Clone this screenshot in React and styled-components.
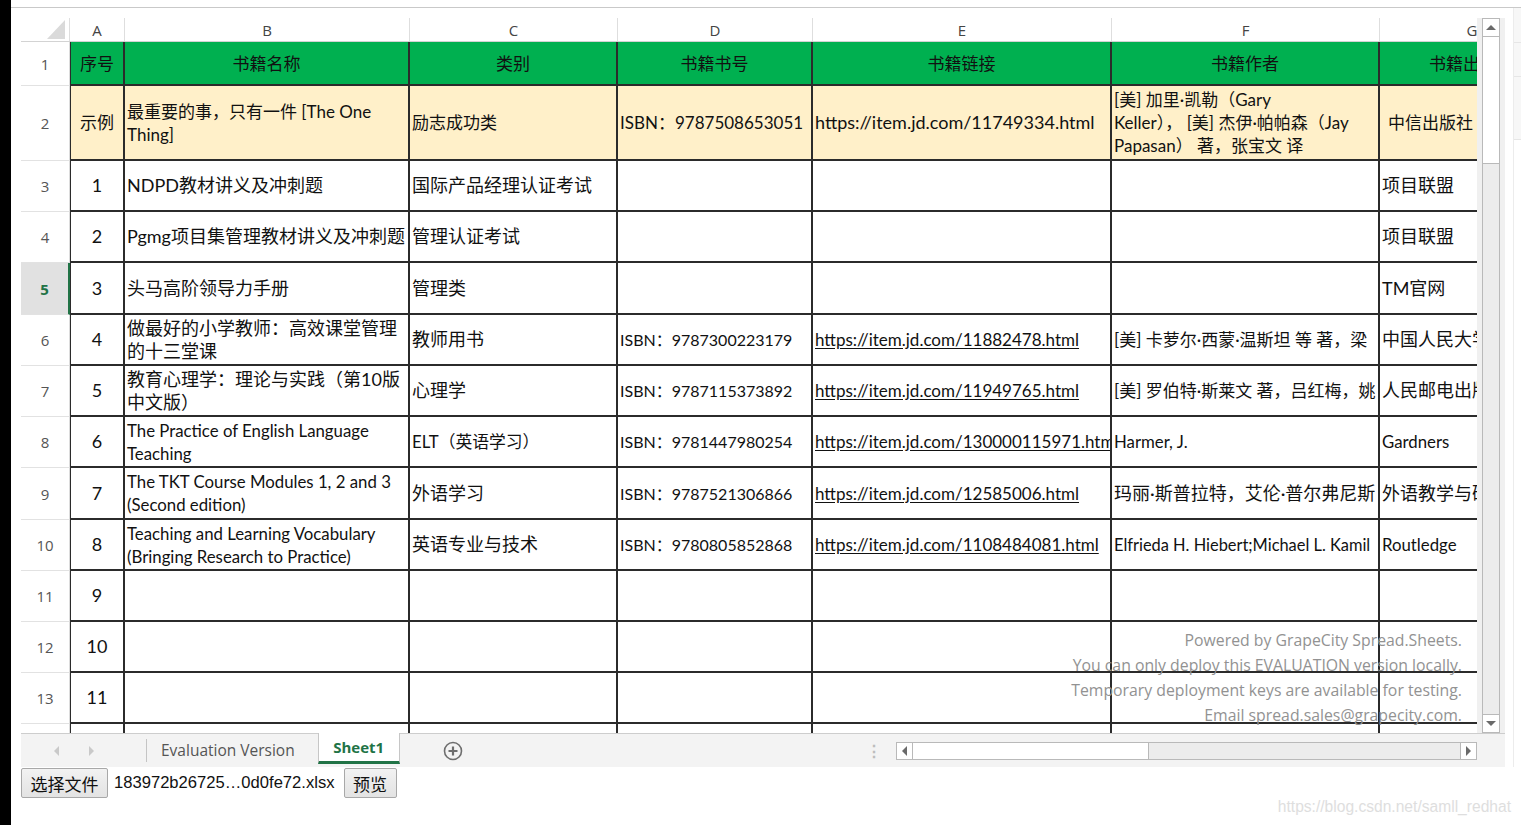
import React from "react";
import styled, { createGlobalStyle } from "styled-components";

const GlobalStyle = createGlobalStyle`
  html, body {
    margin: 0;
    padding: 0;
    background: #fff;
  }
  body {
    font-family: "Open Sans", "Noto Sans CJK SC", sans-serif;
    overflow: hidden;
  }
`;

const LATIN = `"Lato", "Noto Sans CJK SC", sans-serif`;
const SEGOE = `"Open Sans", "Noto Sans CJK SC", sans-serif`;

const COLS = [55, 285, 208, 195, 299, 268, 185];
const LETTERS = ["A", "B", "C", "D", "E", "F", "G"];

// cell helpers
const c = (t, o = {}) => ({ t, ...o });
const num = (t) => c(t, { align: "c", size: 18 });
const en = (t) => c(t, { size: 16.8 });
const isbn = (t) => c(`ISBN：${t}`, { size: 16 });
const link = (t) => c(t, { size: 17, u: true });

const HEAD = ["序号", "书籍名称", "类别", "书籍书号", "书籍链接", "书籍作者", "书籍出版社"].map((t) =>
  c(t, { align: "c", size: 17 })
);

const ROWS = [
  { n: 1, h: 44, bg: "#00b050", cells: HEAD },
  {
    n: 2,
    h: 75,
    bg: "#fff0c9",
    cells: [
      c("示例", { align: "c", size: 17 }),
      c(["最重要的事，只有一件 [The One", "Thing]"], { size: 17 }),
      c("励志成功类", { size: 17 }),
      c("ISBN：9787508653051", { size: 17 }),
      c("https://item.jd.com/11749334.html", { size: 18 }),
      c(["[美] 加里·凯勒（Gary", "Keller）， [美] 杰伊·帕帕森（Jay", "Papasan） 著，张宝文 译"], { size: 17 }),
      c("中信出版社", { size: 17, pad: 8 }),
    ],
  },
  { n: 3, h: 51, cells: [num("1"), c("NDPD教材讲义及冲刺题"), c("国际产品经理认证考试"), c(""), c(""), c(""), c("项目联盟")] },
  { n: 4, h: 51, cells: [num("2"), c("Pgmg项目集管理教材讲义及冲刺题"), c("管理认证考试"), c(""), c(""), c(""), c("项目联盟")] },
  { n: 5, h: 52, selected: true, cells: [num("3"), c("头马高阶领导力手册"), c("管理类"), c(""), c(""), c(""), c("TM官网")] },
  {
    n: 6,
    h: 51,
    cells: [
      num("4"),
      c(["做最好的小学教师：高效课堂管理", "的十三堂课"]),
      c("教师用书"),
      isbn("9787300223179"),
      link("https://item.jd.com/11882478.html"),
      c("[美] 卡萝尔·西蒙·温斯坦 等 著，梁", { size: 17 }),
      c("中国人民大学出版社"),
    ],
  },
  {
    n: 7,
    h: 51,
    cells: [
      num("5"),
      c(["教育心理学：理论与实践（第10版", "中文版）"]),
      c("心理学"),
      isbn("9787115373892"),
      link("https://item.jd.com/11949765.html"),
      c("[美] 罗伯特·斯莱文 著，吕红梅，姚", { size: 17 }),
      c("人民邮电出版社"),
    ],
  },
  {
    n: 8,
    h: 51,
    cells: [
      num("6"),
      en(["The Practice of English Language", "Teaching"]),
      en("ELT（英语学习）"),
      isbn("9781447980254"),
      link("https://item.jd.com/130000115971.html"),
      en("Harmer, J."),
      en("Gardners"),
    ],
  },
  {
    n: 9,
    h: 52,
    cells: [
      num("7"),
      en(["The TKT Course Modules 1, 2 and 3", "(Second edition)"]),
      c("外语学习"),
      isbn("9787521306866"),
      link("https://item.jd.com/12585006.html"),
      c("玛丽·斯普拉特，艾伦·普尔弗尼斯"),
      c("外语教学与研究出版社"),
    ],
  },
  {
    n: 10,
    h: 51,
    cells: [
      num("8"),
      en(["Teaching and Learning Vocabulary", "(Bringing Research to Practice)"]),
      c("英语专业与技术"),
      isbn("9780805852868"),
      link("https://item.jd.com/1108484081.html"),
      c("Elfrieda H. Hiebert;Michael L. Kamil", { size: 16.4 }),
      en("Routledge"),
    ],
  },
  { n: 11, h: 51, cells: [num("9"), c(""), c(""), c(""), c(""), c(""), c("")] },
  { n: 12, h: 51, cells: [num("10"), c(""), c(""), c(""), c(""), c(""), c("")] },
  { n: 13, h: 51, cells: [num("11"), c(""), c(""), c(""), c(""), c(""), c("")] },
  { n: 14, h: 51, cells: [num("12"), c(""), c(""), c(""), c(""), c(""), c("")] },
];

const EVAL_LINES = [
  "Powered by GrapeCity Spread.Sheets.",
  "You can only deploy this EVALUATION version locally.",
  "Temporary deployment keys are available for testing.",
  "Email spread.sales@grapecity.com.",
];

export default function App() {
  return (
    <Page>
      <GlobalStyle />
      <Strip />
      <Main>
        <TopBar />
        <Body>
          <Workbook>
            <SheetArea>
              <Viewport>
                <HeaderRow>
                  <Corner />
                  {LETTERS.map((l, i) => (
                    <ColHeader key={l} $w={COLS[i]}>
                      {l}
                    </ColHeader>
                  ))}
                </HeaderRow>
                {ROWS.map((row) => (
                  <Row key={row.n} $h={row.h}>
                    <RowHeader $selected={row.selected}>{row.n}</RowHeader>
                    {row.cells.map((cell, i) => (
                      <Cell
                        key={i}
                        $w={COLS[i]}
                        $first={i === 0}
                        $bg={row.bg}
                        $align={cell.align}
                        $size={cell.size || 18}
                        $pad={cell.pad}
                      >
                        {Array.isArray(cell.t) ? (
                          cell.t.map((line) => <Line key={line}>{line}</Line>)
                        ) : (
                          <Line $u={cell.u}>{cell.t}</Line>
                        )}
                      </Cell>
                    ))}
                  </Row>
                ))}
                <EvalNotice>
                  {EVAL_LINES.map((l) => (
                    <div key={l}>{l}</div>
                  ))}
                </EvalNotice>
              </Viewport>
              <VScrollCol>
                <VScroll>
                  <ArrowBox $v>
                    <Tri $dir="up" />
                  </ArrowBox>
                  <VThumb />
                  <VTrack />
                  <ArrowBox $v $end>
                    <Tri $dir="down" />
                  </ArrowBox>
                </VScroll>
              </VScrollCol>
            </SheetArea>
            <TabStrip>
              <NavArrows>
                <Tri $dir="left" $light />
                <Tri $dir="right" $light />
              </NavArrows>
              <TabDivider />
              <Tab>Evaluation Version</Tab>
              <Tab $active>Sheet1</Tab>
              <AddSheet>
                <svg width="20" height="20" viewBox="0 0 20 20">
                  <circle cx="10" cy="10" r="8.5" fill="none" stroke="#6e6e6e" strokeWidth="1.6" />
                  <path d="M10 5.5v9M5.5 10h9" stroke="#6e6e6e" strokeWidth="2.2" />
                </svg>
              </AddSheet>
              <Splitter>⋮</Splitter>
              <HScroll>
                <ArrowBox>
                  <Tri $dir="left" />
                </ArrowBox>
                <HThumb />
                <HTrack />
                <ArrowBox $end>
                  <Tri $dir="right" />
                </ArrowBox>
              </HScroll>
            </TabStrip>
          </Workbook>
          <SidePanel>
            <SideCell $h={34} />
            <SideCell $h={33} />
            <SideCell $h={62} />
          </SidePanel>
        </Body>
        <FileRow>
          <FileButton>选择文件</FileButton>
          <FileName>183972b26725…0d0fe72.xlsx</FileName>
          <FileButton>预览</FileButton>
        </FileRow>
      </Main>
      <CsdnMark>https://blog.csdn.net/samll_redhat</CsdnMark>
    </Page>
  );
}

// Styled Components
const Page = styled.div`
  position: relative;
  display: flex;
  width: 1521px;
  height: 825px;
  overflow: hidden;
  background: #fff;
`;

const Strip = styled.div`
  flex: 0 0 11px;
  background: #000;
`;

const Main = styled.div`
  flex: 1;
  display: flex;
  flex-direction: column;
`;

const TopBar = styled.div`
  height: 7px;
  border-bottom: 1px solid #c9c9c9;
`;

const Body = styled.div`
  display: flex;
  margin-top: 10px;
  padding-left: 10px;
  gap: 8px;
`;

const Workbook = styled.div`
  width: 1484px;
  display: flex;
  flex-direction: column;
`;

const SheetArea = styled.div`
  display: flex;
  height: 715px;
`;

const Viewport = styled.div`
  position: relative;
  width: 1456px;
  height: 715px;
  overflow: hidden;
  background: #fff;
`;

const HeaderRow = styled.div`
  display: flex;
  height: 24px;
  box-sizing: border-box;
  border-bottom: 1px solid #d3d3d3;
`;

const Corner = styled.div`
  position: relative;
  flex: 0 0 49px;
  box-sizing: border-box;
  border-right: 1px solid #dedede;

  &::after {
    content: "";
    position: absolute;
    right: 4px;
    bottom: 2px;
    width: 18px;
    height: 19px;
    background: #dadada;
    clip-path: polygon(100% 0, 100% 100%, 0 100%);
  }
`;

const ColHeader = styled.div`
  flex: 0 0 ${(p) => p.$w}px;
  box-sizing: border-box;
  border-right: 1px solid #dedede;
  display: flex;
  align-items: center;
  justify-content: center;
  font-family: ${SEGOE};
  font-size: 15px;
  color: #444;
`;

const Row = styled.div`
  display: flex;
  height: ${(p) => p.$h}px;
  flex: 0 0 ${(p) => p.$h}px;
`;

const RowHeader = styled.div`
  flex: 0 0 49px;
  box-sizing: border-box;
  display: flex;
  align-items: center;
  justify-content: center;
  font-family: ${SEGOE};
  font-size: 15px;
  color: ${(p) => (p.$selected ? "#217346" : "#555")};
  font-weight: ${(p) => (p.$selected ? 700 : 400)};
  background: ${(p) => (p.$selected ? "#e1e1e1" : "#fff")};
  border-bottom: 1px solid #e2e2e2;
  border-right: ${(p) => (p.$selected ? "2px solid #217346" : "1px solid #dcdcdc")};
`;

const Cell = styled.div`
  flex: 0 0 ${(p) => p.$w}px;
  width: ${(p) => p.$w}px;
  box-sizing: border-box;
  display: flex;
  flex-direction: column;
  justify-content: center;
  align-items: ${(p) => (p.$align === "c" ? "center" : "flex-start")};
  padding: 0 ${(p) => (p.$pad != null ? p.$pad : 2)}px;
  border-right: 2px solid #2b2b2b;
  border-bottom: 2px solid #2b2b2b;
  border-left: ${(p) => (p.$first ? "1px solid #2b2b2b" : "none")};
  background: ${(p) => p.$bg || "#fff"};
  overflow: hidden;
  white-space: nowrap;
  font-family: ${LATIN};
  font-size: ${(p) => p.$size}px;
  line-height: 23px;
  color: #111;
`;

const Line = styled.span`
  display: block;
  text-decoration: ${(p) => (p.$u ? "underline" : "none")};
  text-underline-offset: 2px;
`;

const EvalNotice = styled.div`
  position: absolute;
  right: 15px;
  bottom: 5px;
  text-align: right;
  font-family: ${SEGOE};
  font-size: 15.8px;
  line-height: 25px;
  color: #929292;
  white-space: nowrap;
  pointer-events: none;
`;

const VScrollCol = styled.div`
  flex: 0 0 28px;
  display: flex;
  justify-content: center;
  background: #f0f0f0;
`;

const VScroll = styled.div`
  width: 18px;
  display: flex;
  flex-direction: column;
  box-sizing: border-box;
  border: 1px solid #b9b9b9;
  background: #ececec;
`;

const ArrowBox = styled.div`
  ${(p) => (p.$v ? "height: 18px;" : "width: 16px;")}
  flex: 0 0 auto;
  display: flex;
  align-items: center;
  justify-content: center;
  background: #fff;
  box-sizing: border-box;
  ${(p) =>
    p.$v
      ? p.$end
        ? "border-top: 1px solid #b9b9b9;"
        : "border-bottom: 1px solid #b9b9b9;"
      : p.$end
      ? "border-left: 1px solid #b9b9b9;"
      : "border-right: 1px solid #b9b9b9;"}
`;

const Tri = styled.span`
  width: 0;
  height: 0;
  border-style: solid;
  ${(p) => {
    const col = p.$light ? "#c9c9c9" : "#6a6a6a";
    if (p.$dir === "up") return `border-width: 0 5px 5px 5px; border-color: transparent transparent ${col} transparent;`;
    if (p.$dir === "down") return `border-width: 5px 5px 0 5px; border-color: ${col} transparent transparent transparent;`;
    if (p.$dir === "left") return `border-width: 5px 5px 5px 0; border-color: transparent ${col} transparent transparent;`;
    return `border-width: 5px 0 5px 5px; border-color: transparent transparent transparent ${col};`;
  }}
`;

const VThumb = styled.div`
  height: 126px;
  background: #fff;
  border-bottom: 1px solid #b9b9b9;
`;

const VTrack = styled.div`
  flex: 1;
`;

const TabStrip = styled.div`
  height: 34px;
  box-sizing: border-box;
  display: flex;
  align-items: stretch;
  background: #f3f3f3;
  border-top: 1px solid #cdcdcd;
`;

const NavArrows = styled.div`
  width: 125px;
  display: flex;
  align-items: center;
  justify-content: center;
  gap: 30px;
  padding-right: 20px;
  box-sizing: border-box;
`;

const TabDivider = styled.div`
  width: 1px;
  margin: 5px 0 5px;
  background: #c4c4c4;
`;

const Tab = styled.div`
  display: flex;
  align-items: center;
  justify-content: center;
  padding: 0 ${(p) => (p.$active ? 15 : 23)}px 0 ${(p) => (p.$active ? 15 : 14)}px;
  margin-top: -1px;
  font-family: ${SEGOE};
  font-size: ${(p) => (p.$active ? 15 : 15.5)}px;
  font-weight: ${(p) => (p.$active ? 700 : 400)};
  color: ${(p) => (p.$active ? "#217346" : "#555")};
  background: ${(p) => (p.$active ? "#fff" : "transparent")};
  ${(p) =>
    p.$active &&
    `
    border-left: 1px solid #c6c6c6;
    border-right: 1px solid #c6c6c6;
    border-bottom: 3px solid #217346;
    margin-bottom: 3px;
    width: 82px;
    box-sizing: border-box;
  `}
`;

const AddSheet = styled.div`
  display: flex;
  align-items: center;
  padding-left: 43px;
`;

const Splitter = styled.div`
  display: flex;
  align-items: center;
  margin-left: auto;
  margin-right: 14px;
  color: #bdbdbd;
  font-size: 16px;
  font-weight: 700;
`;

const HScroll = styled.div`
  width: 581px;
  height: 18px;
  align-self: center;
  display: flex;
  box-sizing: border-box;
  border: 1px solid #b9b9b9;
  background: #ececec;
  margin-right: 28px;
`;

const HThumb = styled.div`
  width: 235px;
  background: #fff;
  border-right: 1px solid #b9b9b9;
`;

const HTrack = styled.div`
  flex: 1;
`;

const SidePanel = styled.div`
  flex: 1;
  margin-top: -10px;
  display: flex;
  flex-direction: column;
  border-left: 1px solid #ececec;
`;

const SideCell = styled.div`
  height: ${(p) => p.$h}px;
  background: #f7f7f7;
  border-bottom: 1px solid #e6e6e6;
`;

const FileRow = styled.div`
  display: flex;
  align-items: center;
  gap: 6px;
  margin: 1px 0 0 10px;
  height: 30px;
`;

const FileButton = styled.button`
  height: 30px;
  padding: 0 8.5px;
  border: 1px solid #a8a8a8;
  border-radius: 2px;
  background: linear-gradient(#f2f2f2, #e3e3e3);
  font-family: "Noto Sans CJK SC", sans-serif;
  font-size: 17px;
  color: #111;
  cursor: pointer;
`;

const FileName = styled.span`
  font-family: "Liberation Sans", Arial, sans-serif;
  font-size: 16.6px;
  color: #111;
  margin-right: 3px;
`;

const CsdnMark = styled.div`
  position: absolute;
  right: 10px;
  bottom: 9px;
  font-family: "Liberation Sans", Arial, sans-serif;
  font-size: 15.6px;
  color: #dedede;
`;
